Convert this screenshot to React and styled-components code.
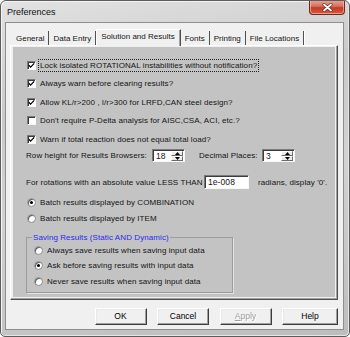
import React from "react";
import styled, { createGlobalStyle } from "styled-components";

const Global = createGlobalStyle`
  html, body {
    margin: 0;
    padding: 0;
    background: #ffffff;
  }
  body {
    font-family: "Liberation Sans", Arial, sans-serif;
    font-size: 8px;
    letter-spacing: 0.08px;
    color: #141414;
  }
`;

const Window = styled.div`
  box-sizing: border-box;
  width: 350px;
  height: 337px;
  border: 1px solid #5c5c5c;
  border-radius: 6px 6px 5px 5px;
  background: linear-gradient(170deg, #e2e2e2 0%, #c9c9c9 30%, #d2d2d2 55%, #bdbdbd 100%);
  box-shadow: inset 1px 1px 0 #f4f4f4, inset -1px -1px 0 #e6e6e6;
  display: flex;
  flex-direction: column;
  overflow: hidden;
`;

const TitleBar = styled.div`
  height: 21px;
  display: flex;
  align-items: flex-start;
  justify-content: space-between;
`;

const Title = styled.div`
  font-size: 9px;
  line-height: 9px;
  letter-spacing: 0;
  padding: 7px 0 0 6px;
  color: #101010;
`;

const CloseButton = styled.div`
  width: 36px;
  height: 15px;
  margin: -1px 4px 0 0;
  box-sizing: border-box;
  border: 1px solid #6e2a20;
  border-top: none;
  border-radius: 0 0 4px 4px;
  background: linear-gradient(180deg, #e8a99b 0%, #d86e5b 45%, #c23b25 55%, #d9593f 100%);
  box-shadow: inset 0 0 0 1px rgba(255, 210, 200, 0.55);
  display: flex;
  align-items: center;
  justify-content: center;
`;

const Client = styled.div`
  margin: 0 5px 6px 4px;
  flex: 1;
  background: #f0f0f0;
  border: 1px solid #8e8e8e;
  display: flex;
  flex-direction: column;
`;

const TabStrip = styled.div`
  height: 22px;
  padding-left: 6px;
  display: flex;
  align-items: flex-end;
`;

const Tab = styled.div`
  box-sizing: border-box;
  height: ${(p) => (p.$active ? 17 : 14)}px;
  padding: ${(p) => (p.$active ? "2px 5px 0 4px" : "3px 4px 0 4px")};
  line-height: 9px;
  white-space: nowrap;
  letter-spacing: 0;
  background: #f0f0f0;
  border-right: 1px solid #505050;
  border-left: ${(p) => (p.$active ? "1px solid #ffffff" : "none")};
  border-top: ${(p) => (p.$active ? "1px solid #ffffff" : "none")};
  box-shadow: ${(p) => (p.$active ? "inset -1px 0 0 #a0a0a0" : "1px 0 0 #ffffff")};
  margin-bottom: ${(p) => (p.$active ? "-1px" : "0")};
  position: relative;
  z-index: ${(p) => (p.$active ? 2 : 1)};
`;

const Panel = styled.div`
  margin: 0 5px 0 4px;
  height: 255px;
  box-sizing: border-box;
  border: 1px solid;
  border-color: #ffffff #505050 #505050 #ffffff;
  box-shadow: inset -1px -1px 0 #a0a0a0;
  padding: 1px 2px 2px 2px;
  display: flex;
`;

const Page = styled.div`
  flex: 1;
  background: #c3c3c3;
  padding: 9px 0 0 13px;
  display: flex;
  flex-direction: column;
`;

const CheckRow = styled.div`
  height: 18.5px;
  display: flex;
  align-items: center;
  padding-left: 1px;
`;

const Box = styled.span`
  box-sizing: border-box;
  width: 9px;
  height: 9px;
  background: #ffffff;
  border: 1px solid;
  border-color: #7a7a7a #f8f8f8 #f8f8f8 #7a7a7a;
  box-shadow: inset 1px 1px 0 #3c3c3c;
  display: flex;
  align-items: center;
  justify-content: center;
  flex-shrink: 0;
`;

const Radio = styled.span`
  box-sizing: border-box;
  width: 9px;
  height: 9px;
  border-radius: 50%;
  background: #ffffff;
  border: 1px solid #8a8a8a;
  box-shadow: inset 1px 1px 0 #5a5a5a;
  display: flex;
  align-items: center;
  justify-content: center;
  flex-shrink: 0;

  &::after {
    content: "";
    width: 3px;
    height: 3px;
    border-radius: 50%;
    background: ${(p) => (p.$on ? "#000" : "transparent")};
  }
`;

const Label = styled.span`
  margin-left: 3px;
  padding: 1px 1px;
  line-height: 9px;
  white-space: nowrap;
  outline: ${(p) => (p.$focus ? "1px dotted #202020" : "none")};
  outline-offset: 0;
`;

const FieldRow = styled.div`
  height: ${(p) => p.$h || 14}px;
  margin-top: ${(p) => p.$mt || 0}px;
  display: flex;
  align-items: center;
  white-space: nowrap;
`;

const FieldText = styled.span`
  width: ${(p) => (p.$w ? `${p.$w}px` : "auto")};
  margin-left: ${(p) => p.$ml || 0}px;
  flex-shrink: 0;
`;

const Spin = styled.div`
  box-sizing: border-box;
  width: 33px;
  height: 13px;
  background: #ffffff;
  border: 1px solid;
  border-color: #7a7a7a #f8f8f8 #f8f8f8 #7a7a7a;
  box-shadow: inset 1px 1px 0 #3c3c3c;
  display: flex;
  flex-shrink: 0;
`;

const SpinValue = styled.span`
  flex: 1;
  padding: 2px 0 0 3px;
  line-height: 9px;
  font-size: 8.5px;
`;

const SpinButtons = styled.div`
  width: 12px;
  display: flex;
  flex-direction: column;
  margin: 1px 1px 1px 0;
`;

const SpinButton = styled.div`
  flex: 1;
  box-sizing: border-box;
  background: #ececec;
  border: 1px solid;
  border-color: #ffffff #6a6a6a #6a6a6a #ffffff;
  display: flex;
  align-items: center;
  justify-content: center;
`;

const TextInput = styled.div`
  box-sizing: border-box;
  width: 45px;
  height: 14px;
  background: #ffffff;
  border: 1px solid;
  border-color: #7a7a7a #f8f8f8 #f8f8f8 #7a7a7a;
  box-shadow: inset 1px 1px 0 #3c3c3c;
  padding: 2px 0 0 3px;
  line-height: 9px;
  font-size: 8.5px;
  flex-shrink: 0;
`;

const RadioRow = styled.div`
  height: ${(p) => p.$h || 16}px;
  margin-top: ${(p) => p.$mt || 0}px;
  display: flex;
  align-items: center;
  padding-left: 1px;
`;

const Group = styled.fieldset`
  width: 207px;
  box-sizing: border-box;
  margin: 6px 0 0 0;
  padding: 0 0 3px 6px;
  border: 1px solid #9c9c9c;
  box-shadow: 1px 1px 0 #e2e2e2;
  min-width: 0;
`;

const Legend = styled.legend`
  padding: 0 1px;
  margin-left: -1px;
  height: 10px;
  line-height: 10px;
  color: #2a2af0;
`;

const ButtonRow = styled.div`
  display: flex;
  justify-content: flex-end;
  gap: 10.5px;
  margin: 8px 5px 0 0;
`;

const Button = styled.div`
  box-sizing: border-box;
  width: ${(p) => p.$w || 52}px;
  height: 17px;
  background: #f0f0f0;
  border: 1px solid;
  border-color: #ffffff #3c3c3c #3c3c3c #ffffff;
  box-shadow: inset -1px -1px 0 #a0a0a0, inset 1px 1px 0 #e8e8e8;
  display: flex;
  align-items: center;
  justify-content: center;
  font-size: 8.5px;
  letter-spacing: 0;
  color: ${(p) => (p.$disabled ? "#a0a0a0" : "#000")};
  text-shadow: ${(p) => (p.$disabled ? "1px 1px 0 #ffffff" : "none")};
  padding-bottom: 1px;
`;

const Check = () => (
  <svg width="7" height="7" viewBox="0 0 7 7">
    <path d="M0.8 3.3 L2.6 5.1 L6.2 1.4" fill="none" stroke="#000" strokeWidth="1.3" />
  </svg>
);

const Arrow = ({ up }) => (
  <svg width="5" height="3" viewBox="0 0 5 3">
    <path d={up ? "M0 3 L2.5 0 L5 3 Z" : "M0 0 L2.5 3 L5 0 Z"} fill="#000" />
  </svg>
);

const SpinBox = ({ value }) => (
  <Spin>
    <SpinValue>{value}</SpinValue>
    <SpinButtons>
      <SpinButton>
        <Arrow up />
      </SpinButton>
      <SpinButton>
        <Arrow />
      </SpinButton>
    </SpinButtons>
  </Spin>
);

const tabs = ["General", "Data Entry", "Solution and Results", "Fonts", "Printing", "File Locations"];

const checks = [
  { text: "Lock isolated ROTATIONAL instabilities without notification?", on: true, focus: true },
  { text: "Always warn before clearing results?", on: true },
  { text: "Allow KL/r>200 , l/r>300 for LRFD,CAN steel design?", on: true },
  { text: "Don't require P-Delta analysis for AISC,CSA, ACI, etc.?", on: false },
  { text: "Warn if total reaction does not equal total load?", on: true },
];

const saving = [
  { text: "Always save results when saving input data", on: false },
  { text: "Ask before saving results with input data", on: true },
  { text: "Never save results when saving input data", on: false },
];

export default function App() {
  return (
    <>
      <Global />
      <Window>
        <TitleBar>
          <Title>Preferences</Title>
          <CloseButton>
            <svg width="11" height="9" viewBox="0 0 11 9">
              <path d="M2 1.5 L9 7.5 M9 1.5 L2 7.5" stroke="#6b2a22" strokeWidth="3.2" strokeLinecap="round" />
              <path d="M2 1.5 L9 7.5 M9 1.5 L2 7.5" stroke="#ffffff" strokeWidth="1.8" strokeLinecap="round" />
            </svg>
          </CloseButton>
        </TitleBar>
        <Client>
          <TabStrip>
            {tabs.map((t) => (
              <Tab key={t} $active={t === "Solution and Results"}>
                {t}
              </Tab>
            ))}
          </TabStrip>
          <Panel>
            <Page>
              {checks.map((c) => (
                <CheckRow key={c.text}>
                  <Box>{c.on && <Check />}</Box>
                  <Label $focus={c.focus}>{c.text}</Label>
                </CheckRow>
              ))}
              <FieldRow>
                <FieldText $w={126}>Row height for Results Browsers:</FieldText>
                <SpinBox value="18" />
                <FieldText $ml={14} $w={63}>
                  Decimal Places:
                </FieldText>
                <SpinBox value="3" />
              </FieldRow>
              <FieldRow $mt={12.5}>
                <FieldText $w={178}>For rotations with an absolute value LESS THAN</FieldText>
                <TextInput>1e-008</TextInput>
                <FieldText $ml={9}>radians, display '0'.</FieldText>
              </FieldRow>
              <RadioRow $mt={5.5}>
                <Radio $on />
                <Label>Batch results displayed by COMBINATION</Label>
              </RadioRow>
              <RadioRow>
                <Radio />
                <Label>Batch results displayed by ITEM</Label>
              </RadioRow>
              <Group>
                <Legend>Saving Results (Static AND Dynamic)</Legend>
                {saving.map((s) => (
                  <RadioRow key={s.text} $h={15.5}>
                    <Radio $on={s.on} />
                    <Label>{s.text}</Label>
                  </RadioRow>
                ))}
              </Group>
            </Page>
          </Panel>
          <ButtonRow>
            <Button>OK</Button>
            <Button>Cancel</Button>
            <Button $disabled>
              <u>A</u>pply
            </Button>
            <Button $w={56}>Help</Button>
          </ButtonRow>
        </Client>
      </Window>
    </>
  );
}
